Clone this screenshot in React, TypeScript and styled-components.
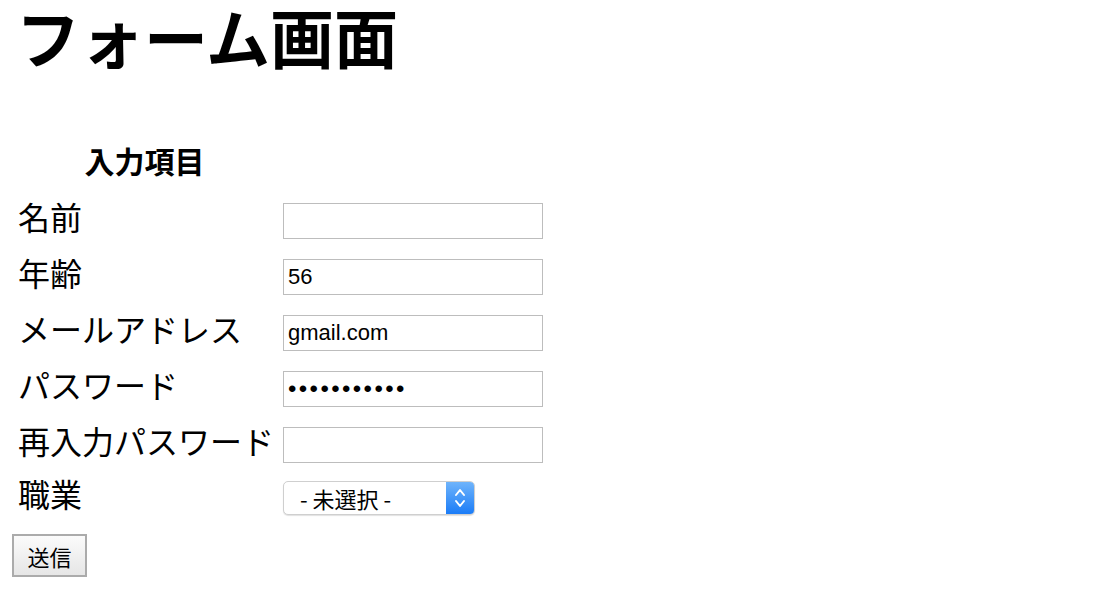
import React from "react";
import styled, { createGlobalStyle } from "styled-components";

const Global = createGlobalStyle`
  html, body { margin: 0; padding: 0; background: #fff; color: #000; }
  body { font-family: "Noto Sans CJK JP", "Liberation Sans", sans-serif; }
`;

const Page = styled.div`
  padding: 0 8px;
`;

const Title = styled.h1`
  margin: 0;
  font-size: 64px;
  font-weight: 700;
  line-height: 70px;
  padding-left: 8px;
`;

const Form = styled.form`
  display: flex;
  flex-direction: column;
  align-items: flex-start;
`;

const Grid = styled.div`
  margin-top: 62px;
  display: grid;
  grid-template-columns: 273px 262px;
  grid-template-rows: 61px repeat(5, 56px) 50px;
  column-gap: 2px;
  align-items: center;
`;

const Heading = styled.div`
  font-size: 30px;
  font-weight: 700;
  line-height: 1;
  text-align: center;
  padding-bottom: 6px;
`;

const Label = styled.label`
  font-size: 32px;
  line-height: 1;
  padding-left: 10px;
  padding-bottom: 10px;
  white-space: nowrap;
`;

const Input = styled.input`
  box-sizing: border-box;
  width: 260px;
  height: 36px;
  margin: 0;
  padding: 0 4px;
  border: 1px solid #bdbdbd;
  border-radius: 0;
  font-family: "Liberation Sans", "Noto Sans CJK JP", sans-serif;
  font-size: 22px;
  color: #000;
  outline: none;
  &[type="password"] {
    letter-spacing: 2.4px;
    font-size: 24px;
  }
`;

const SelectWrap = styled.div`
  position: relative;
  width: 192px;
  height: 34px;
  box-sizing: border-box;
  border: 1px solid #cfcfcf;
  border-radius: 5px;
  box-shadow: 0 1px 1px rgba(0, 0, 0, 0.12);
  overflow: hidden;
  background: #fff;
`;

const Select = styled.select`
  appearance: none;
  -webkit-appearance: none;
  width: 100%;
  height: 100%;
  margin: 0;
  border: none;
  background: transparent;
  padding: 0 0 0 16px;
  font-family: "Noto Sans CJK JP", sans-serif;
  font-size: 22px;
  color: #000;
  outline: none;
`;

const Stepper = styled.div`
  position: absolute;
  top: 0;
  right: 0;
  width: 28px;
  height: 100%;
  background: linear-gradient(#6fb4fb, #1b7cf7);
  display: flex;
  align-items: center;
  justify-content: center;
  pointer-events: none;
`;

const Button = styled.button`
  margin: 11px 0 0 4px;
  box-sizing: border-box;
  width: 75px;
  height: 43px;
  border: 2px solid #ababab;
  border-radius: 0;
  background: linear-gradient(#fbfbfb, #e6e6e6);
  font-family: "Noto Sans CJK JP", sans-serif;
  font-size: 22px;
  line-height: 1;
  color: #000;
  padding: 0;
`;

const Empty = styled.div``;

export default function App() {
  return (
    <Page>
      <Global />
      <Title>フォーム画面</Title>
      <Form onSubmit={(e) => e.preventDefault()}>
        <Grid>
          <Heading>入力項目</Heading>
          <Empty />
          <Label>名前</Label>
          <Input type="text" defaultValue="" />
          <Label>年齢</Label>
          <Input type="text" defaultValue="56" />
          <Label>メールアドレス</Label>
          <Input type="text" defaultValue="gmail.com" />
          <Label>パスワード</Label>
          <Input type="password" defaultValue="abcdefghijk" />
          <Label>再入力パスワード</Label>
          <Input type="password" defaultValue="" />
          <Label>職業</Label>
          <SelectWrap>
            <Select defaultValue="">
              <option value="">- 未選択 -</option>
            </Select>
            <Stepper>
              <svg width="12" height="22" viewBox="0 0 12 22" fill="none" stroke="#fff" strokeWidth="2" strokeLinecap="round" strokeLinejoin="round">
                <polyline points="2,8 6,3 10,8" />
                <polyline points="2,14 6,19 10,14" />
              </svg>
            </Stepper>
          </SelectWrap>
        </Grid>
        <Button type="submit">送信</Button>
      </Form>
    </Page>
  );
}
